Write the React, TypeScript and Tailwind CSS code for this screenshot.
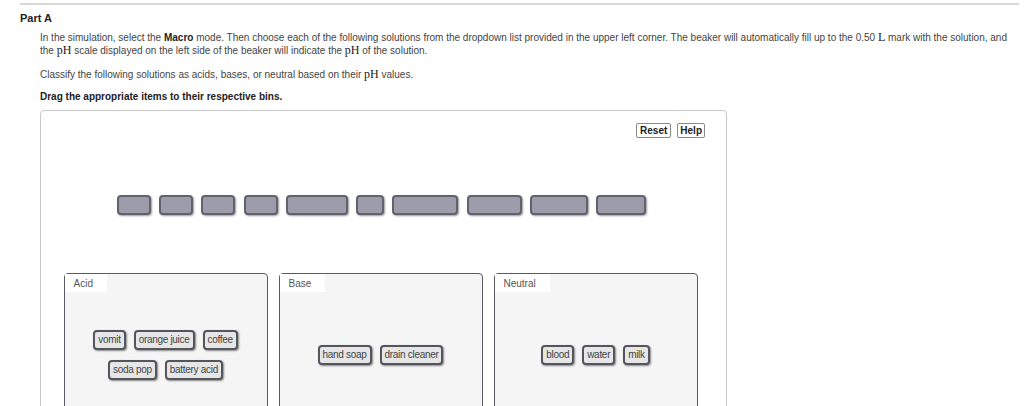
const slots = [34, 34, 34, 34, 62, 28, 66, 55, 58, 50];

const bins: { label: string; rows: string[][] }[] = [
  { label: "Acid", rows: [["vomit", "orange juice", "coffee"], ["soda pop", "battery acid"]] },
  { label: "Base", rows: [["hand soap", "drain cleaner"]] },
  { label: "Neutral", rows: [["blood", "water", "milk"]] },
];

function PH() {
  return <span className="font-['Liberation_Serif',serif] text-[12px] leading-none text-[#222]">pH</span>;
}

function Item({ text }: { text: string }) {
  return (
    <span className="flex h-[20px] items-center rounded-[4px] border-2 border-[#55555e] bg-[#e6e6e6] px-[3px] text-[10px] leading-none tracking-[-0.3px] text-[#444] shadow-[1px_1px_2px_rgba(0,0,0,0.45)]">
      {text}
    </span>
  );
}

export default function App() {
  return (
    <div className="h-[406px] w-[1024px] overflow-hidden bg-white font-['Liberation_Sans',Arial,sans-serif]">
      <div className="ml-[20px] mr-[5px] mt-[3px] h-[2px] bg-[#d6d6d6]" />
      <h2 className="ml-[20px] mt-[6px] text-[11px] font-bold leading-[14px] text-[#222]">Part A</h2>

      <div className="ml-[40px] mr-[8px] mt-[6px] text-[10px] leading-[13px] text-[#444]">
        <p>
          In the simulation, select the <b className="text-[#222]">Macro</b> mode. Then choose each of the following
          solutions from the dropdown list provided in the upper left corner. The beaker will automatically fill up to
          the 0.50 <span className="font-['Liberation_Serif',serif] text-[12px] leading-none text-[#222]">L</span> mark
          with the solution, and the <PH /> scale displayed on the left side of the beaker will indicate the <PH /> of
          the solution.
        </p>
        <p className="mt-[11px]">
          Classify the following solutions as acids, bases, or neutral based on their <PH /> values.
        </p>
        <p className="mt-[9px] font-bold text-[#222]">Drag the appropriate items to their respective bins.</p>
      </div>

      <section className="ml-[40px] mt-[7px] w-[687px] rounded-[4px] border border-[#c8c8c8] pb-[20px]">
        <div className="mr-[21px] mt-[12px] flex justify-end gap-[6px]">
          <button className="h-[15px] rounded-[2px] border border-[#8a8a8a] bg-white px-[3px] text-[10px] font-bold leading-none text-[#222]">
            Reset
          </button>
          <button className="h-[15px] rounded-[2px] border border-[#8a8a8a] bg-white px-[2px] text-[10px] font-bold leading-none text-[#222]">
            Help
          </button>
        </div>

        <div className="mt-[57px] flex justify-center gap-[8.3px] pr-[4px]">
          {slots.map((w, i) => (
            <div
              key={i}
              style={{ width: w }}
              className="h-[20px] rounded-[4px] border-2 border-[#62626e] bg-[#9c9cab] shadow-[1px_1px_2px_rgba(0,0,0,0.4)]"
            />
          ))}
        </div>

        <div className="mt-[58px] flex justify-center gap-[11px] pr-[6px]">
          {bins.map((bin) => (
            <div
              key={bin.label}
              className="flex h-[170px] w-[204px] flex-col rounded-[4px] border-[1.5px] border-[#5a5a62] bg-[#f5f5f5]"
            >
              <span className="h-[18px] w-fit bg-white pl-[9px] pr-[14px] pt-[4px] text-[10px] leading-[12px] text-[#555]">
                {bin.label}
              </span>
              <div className="flex h-[125px] flex-col items-center justify-center gap-[10px]">
                {bin.rows.map((row, i) => (
                  <div key={i} className="flex gap-[8px]">
                    {row.map((t) => (
                      <Item key={t} text={t} />
                    ))}
                  </div>
                ))}
              </div>
            </div>
          ))}
        </div>
      </section>
    </div>
  );
}
